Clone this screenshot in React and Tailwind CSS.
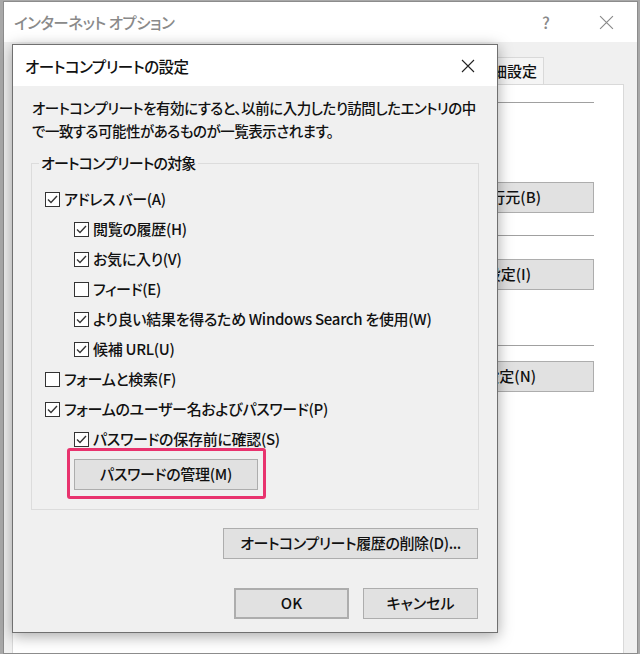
import React from "react";

const font = "font-['Noto_Sans_CJK_JP',sans-serif] [font-feature-settings:'palt'] font-medium";

function Check({ checked }) {
  return (
    <span className="w-[15px] h-[15px] shrink-0 border border-[#333] bg-white flex items-center justify-center">
      {checked && (
        <svg width="13" height="13" viewBox="0 0 13 13">
          <path d="M2 6.5 L5 9.5 L11 3" fill="none" stroke="#333" strokeWidth="1.4" />
        </svg>
      )}
    </span>
  );
}

function Row({ level = 0, checked, children }) {
  return (
    <div className={`h-[30px] flex items-center gap-[4px] ${level ? "pl-[42px]" : "pl-[13px]"}`}>
      <Check checked={checked} />
      <span className="text-[15px] leading-[20px] tracking-[-0.3px] whitespace-nowrap">{children}</span>
    </div>
  );
}

function Btn({ className = "", children }) {
  return (
    <div
      className={`h-[31px] bg-[#e1e1e1] border border-[#adadad] flex items-center justify-center text-[15px] whitespace-nowrap ${className}`}
    >
      {children}
    </div>
  );
}

function CloseGlyph({ size = 14, color = "#333" }) {
  return (
    <svg width={size} height={size} viewBox="0 0 14 14">
      <path d="M1 1 L13 13 M13 1 L1 13" stroke={color} strokeWidth="1.1" fill="none" />
    </svg>
  );
}

function AutoCompleteDialog() {
  return (
    <div className="absolute left-[12px] top-[44px] w-[486px] h-[589px] border border-[#707070] bg-[#f0f0f0] flex flex-col shadow-[0_3px_14px_rgba(0,0,0,0.35)] text-[#111]">
      <div className="h-[41px] bg-white flex items-center pl-[12px] pr-[22px] shrink-0">
        <span className="text-[15.5px] leading-[20px] tracking-[-0.5px] flex-1">オートコンプリートの設定</span>
        <CloseGlyph size={14} color="#222" />
      </div>

      <div className="flex-1 flex flex-col px-[18px] pt-[10px]">
        <p className="text-[14.5px] leading-[23px] tracking-[-0.5px] pl-[1px] whitespace-nowrap">
          オートコンプリートを有効にすると、以前に入力したり訪問したエントリの中
          <br />
          で一致する可能性があるものが一覧表示されます。
        </p>

        <fieldset className="mt-[11px] border border-[#dcdcdc] pb-[10px]">
          <legend className="ml-[7px] px-[2px] text-[15px] leading-[20px] tracking-[-0.8px]">オートコンプリートの対象</legend>
          <div className="pt-[11px] flex flex-col">
            <Row checked>アドレス バー(A)</Row>
            <Row level={1} checked>閲覧の履歴(H)</Row>
            <Row level={1} checked>お気に入り(V)</Row>
            <Row level={1}>フィード(E)</Row>
            <Row level={1} checked>より良い結果を得るため Windows Search を使用(W)</Row>
            <Row level={1} checked>候補 URL(U)</Row>
            <Row>フォームと検索(F)</Row>
            <Row checked>フォームのユーザー名およびパスワード(P)</Row>
            <Row level={1} checked>パスワードの保存前に確認(S)</Row>
          </div>
          <div className="-mt-[6px] ml-[35px] w-[199px] border-[3px] border-[#e8336e] rounded-[3px] pt-[8px] pb-[6px] pl-[4px] pr-[5px]">
            <Btn className="w-full tracking-[-0.3px]">パスワードの管理(M)</Btn>
          </div>
        </fieldset>

        <div className="mt-[18px] flex justify-end pr-[1px]">
          <Btn className="w-[255px] tracking-[-0.4px]">オートコンプリート履歴の削除(D)...</Btn>
        </div>

        <div className="mt-[29px] flex justify-end gap-[14px] pr-[1px]">
          <Btn className="w-[115px] border-2 border-[#0078d7]">OK</Btn>
          <Btn className="w-[115px]">キャンセル</Btn>
        </div>
      </div>
    </div>
  );
}

export default function App() {
  return (
    <div className={`relative w-[640px] h-[654px] overflow-hidden bg-[#a8a8a8] pl-[3px] pt-[1px] pr-[2px] ${font}`}>
      <div className="h-[653px] border border-[#8c8c8c] bg-[#f0f0f0] flex flex-col">
        {/* background window title bar */}
        <div className="h-[40px] bg-white flex items-center shrink-0">
          <span className="pl-[10px] flex-1 text-[15.5px] leading-[20px] tracking-[-0.5px] text-[#8a8a8a]">インターネット オプション</span>
          <span className="w-[58px] text-center text-[16px] text-[#8a8a8a]">?</span>
          <span className="w-[62px] flex justify-center">
            <CloseGlyph size={15} color="#8a8a8a" />
          </span>
        </div>

        <div className="flex-1 flex flex-col pl-[8px] pr-[13px] text-[#111]">
          <div className="mt-[15px] h-[27px] flex justify-end pr-[80px]">
            <div className="px-[6px] border border-b-0 border-[#d9d9d9] bg-[#f5f5f5] flex items-center text-[15px]">
              詳細設定
            </div>
          </div>
          <div className="flex-1 bg-white border border-b-0 border-[#d9d9d9] flex flex-col items-end pr-[29px]">
            <div className="mt-[17px] w-[300px] h-px bg-[#a0a0a0]" />
            <Btn className="mt-[79px] w-[200px] justify-end pr-[52px]">発行元(B)</Btn>
            <div className="mt-[22px] w-[300px] h-px bg-[#a0a0a0]" />
            <Btn className="mt-[23px] w-[200px] justify-end pr-[62px]">設定(I)</Btn>
            <div className="mt-[55px] w-[300px] h-px bg-[#a0a0a0]" />
            <Btn className="mt-[15px] w-[200px] justify-end pr-[57px]">設定(N)</Btn>
          </div>
        </div>
      </div>

      <AutoCompleteDialog />
    </div>
  );
}
